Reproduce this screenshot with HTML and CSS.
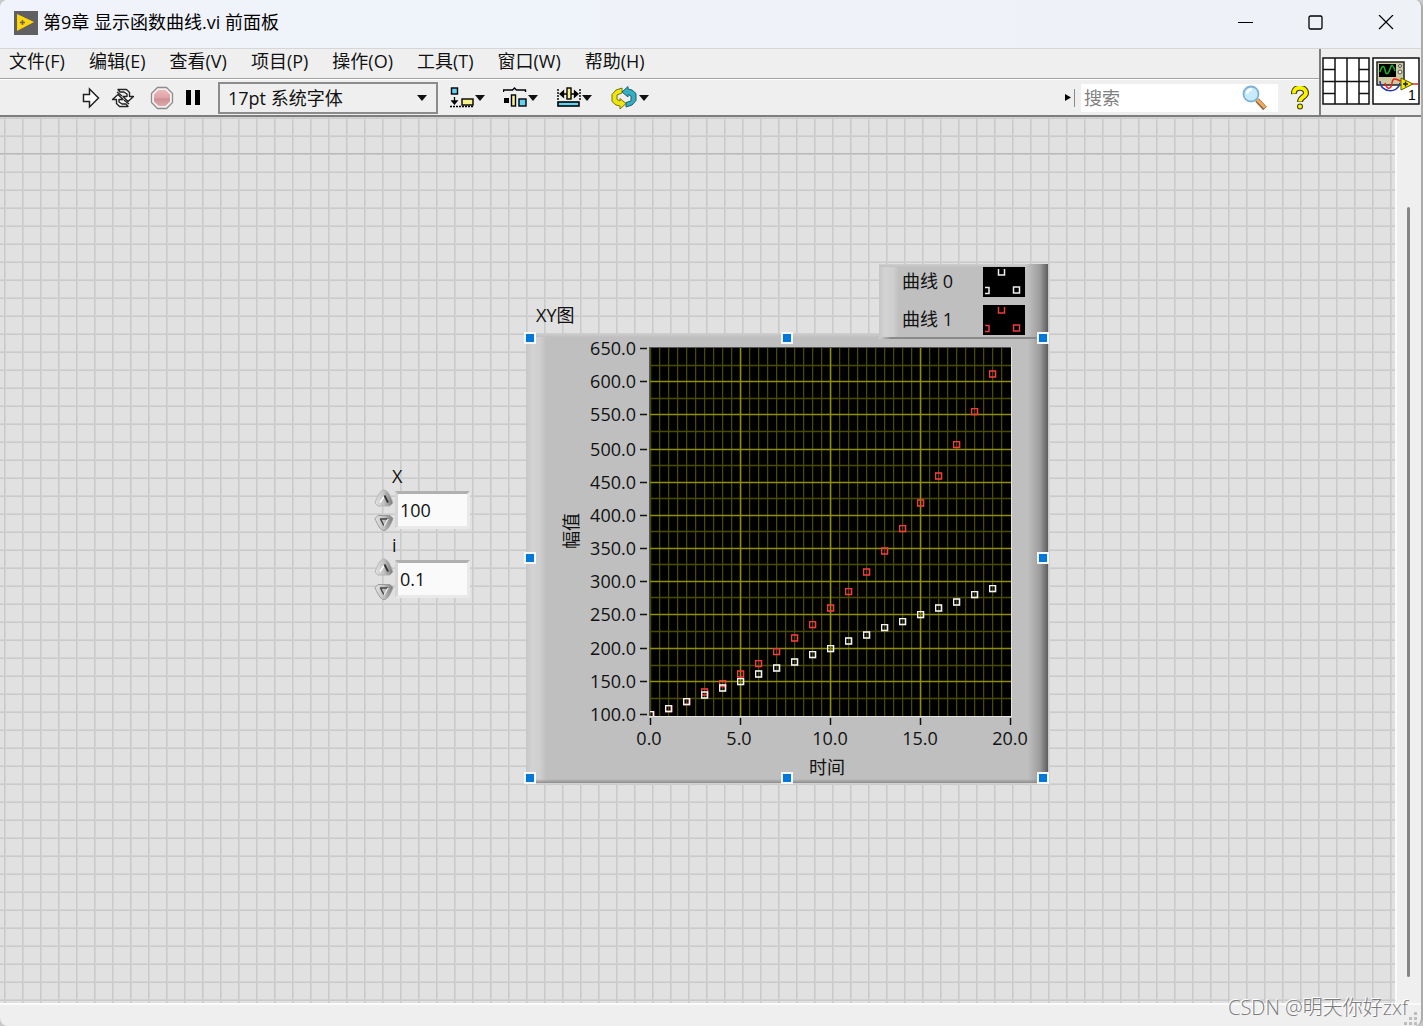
FILE: index.html
```html
<!DOCTYPE html>
<html lang="zh-CN">
<head>
<meta charset="utf-8">
<title>第9章 显示函数曲线.vi 前面板</title>
<link rel="stylesheet" href="styles.css">
</head>
<body>
<div class="window">
  <header class="titlebar">
    <svg class="app-icon" width="24" height="24" viewBox="0 0 24 24" aria-hidden="true">
      <rect width="24" height="24" fill="#606062"/>
      <path d="M3 3 L20 11 L3 20 Z" fill="#ffd60a"/>
      <path d="M6 11.500h5M8.500 9v5" stroke="#606062" stroke-width="1.500"/>
    </svg>
    <h1 class="title">第9章 显示函数曲线.vi 前面板</h1>
    <div class="caption-buttons">
      <button class="caption-button" aria-label="最小化"><svg width="16" height="16" viewBox="0 0 16 16"><path d="M0 7.500h15" stroke="#000"/></svg></button>
      <button class="caption-button" aria-label="最大化"><svg width="16" height="16" viewBox="0 0 16 16"><rect x="1" y="1" width="13" height="13" rx="1.500" fill="none" stroke="#000" stroke-width="1.300"/></svg></button>
      <button class="caption-button" aria-label="关闭"><svg width="16" height="16" viewBox="0 0 16 16"><path d="M1 0l14 14M15 0L1 14" stroke="#000" stroke-width="1.200"/></svg></button>
    </div>
  </header>

  <div class="chrome">
    <div class="bars">
      <nav class="menubar">
        <button>文件(F)</button>
        <button>编辑(E)</button>
        <button>查看(V)</button>
        <button>项目(P)</button>
        <button>操作(O)</button>
        <button>工具(T)</button>
        <button>窗口(W)</button>
        <button>帮助(H)</button>
      </nav>
      <div class="toolbar">
        <div class="run-group">
          <button aria-label="运行"><svg width="18" height="22" viewBox="0 0 18 22"><path d="M1.500 7.500h6v-5.500l9 9-9 9v-5.500h-6z" fill="#fff" stroke="#222" stroke-width="1.500"/></svg></button>
          <button aria-label="连续运行"><svg width="24" height="22" viewBox="0 0 24 22"><g fill="#fff" stroke="#222" stroke-width="1.400" stroke-linejoin="round"><path d="M7 2.500h8.500l3 3v4h4l-5.500 5-5-5h4V7L13 5H9z"/><path d="M17 19.500H8.500l-3-3v-4h-4l5.500-5 5 5H8V15l3 2h4z"/></g><path d="M6 5l5 4M13 13l5 4" stroke="#222" stroke-width="1.400"/></svg></button>
        </div>
        <div class="stop-group">
          <button aria-label="中止执行"><svg width="24" height="24" viewBox="0 0 24 24"><defs><linearGradient id="stop" x2="0" y2="1"><stop offset="0" stop-color="#eab8ba"/><stop offset=".5" stop-color="#dfa2a5"/><stop offset=".55" stop-color="#cc8f93"/><stop offset="1" stop-color="#dfa9ac"/></linearGradient></defs><path d="M7.500 1.500h9l6 6v9l-6 6h-9l-6-6v-9z" fill="#f7f1f1" stroke="#8b8b8b" stroke-width="1.300"/><path d="M8.500 4h7l4.500 4.500v7L15.500 20h-7L4 15.500v-7z" fill="url(#stop)"/></svg></button>
          <button aria-label="暂停"><svg width="14" height="16" viewBox="0 0 14 16"><path d="M0 0h5v15H0zM9 0h5v15H9z" fill="#000"/></svg></button>
        </div>
        <div class="font-select">
          <select aria-label="文本设置"><option>17pt 系统字体</option></select>
        </div>
        <div class="layout-group">
          <button class="drop" aria-label="对齐对象"><svg width="24" height="22" viewBox="0 0 24 22"><rect x="1.500" y="1" width="6" height="6" fill="#62d3f5" stroke="#000" stroke-width="1.400"/><path d="M4.500 10v6M2 14l2.500 3L7 14z" stroke="#000" stroke-width="1.300"/><rect x="12" y="12" width="11" height="6" fill="#f7f28a" stroke="#000" stroke-width="1.400"/><path d="M0 19.500h23" stroke="#000" stroke-width="1.300" stroke-dasharray="2 1"/></svg></button>
          <button class="drop" aria-label="分布对象"><svg width="24" height="22" viewBox="0 0 24 22"><path d="M.5 5V3h9l2-2 2 2h9v2" fill="none" stroke="#000" stroke-width="1.400"/><rect x="1" y="11" width="5" height="5"/><rect x="8.500" y="8" width="4" height="11" fill="#f7f28a" stroke="#000" stroke-width="1.400"/><rect x="16" y="12" width="7" height="7" fill="#62d3f5" stroke="#000" stroke-width="1.400"/></svg></button>
          <button class="drop" aria-label="调整对象大小"><svg width="25" height="22" viewBox="0 0 25 22"><path d="M2 2v12M24 2v12" stroke="#000" stroke-width="1.400" stroke-dasharray="2 1"/><path d="M4 7h18M7.500 4L4 7l3.500 3zM18.500 4L22 7l-3.500 3z" stroke="#000" stroke-width="1.300"/><rect x="11" y="1" width="4" height="11" fill="#f7f28a" stroke="#000" stroke-width="1.400"/><rect x="2" y="15" width="21" height="4" fill="#62d3f5" stroke="#000" stroke-width="1.600"/></svg></button>
          <button class="drop" aria-label="重新排序"><svg width="28" height="24" viewBox="0 0 28 24"><path d="M12 2L6 4 2 8.500v7L6 19l4 1v3l6-5.500-6-5V15l-3-1.500V9l5-2z" fill="#eee70e" stroke="#77730c"/><path d="M16 21l6-2 4-4.500v-7L22 4l-4-1V.5L12 6l6 5V8.500l3 1.500v5l-5 1.500z" fill="#35aec4" stroke="#17616e"/></svg></button>
        </div>
        <div class="search-group">
          <button class="expander" aria-label="展开"><svg width="10" height="18" viewBox="0 0 10 18"><path d="M0 5l6 3.500-6 3.500z"/><path d="M9.500 0v18" stroke="#8a8a8a"/></svg></button>
          <div class="search-box">
            <input type="search" placeholder="搜索" aria-label="搜索">
            <svg width="26" height="26" viewBox="0 0 26 26" aria-hidden="true"><path d="M15 15l8 8.500" stroke="#8e6a4c" stroke-width="5"/><path d="M15 14.500l8 8" stroke="#f0a85a" stroke-width="3"/><circle cx="9" cy="9" r="7.500" fill="#c6ecfc" stroke="#7fb1d6" stroke-width="1.800"/><path d="M5 8.500a4.500 4.500 0 0 1 5-4" fill="none" stroke="#fff" stroke-width="2.500"/></svg>
          </div>
          <button class="help" aria-label="帮助"><svg width="18" height="24" viewBox="0 0 18 24"><g fill="none"><path d="M3 8c-1-8 12-8 12-1 0 4-6 4-6 9" stroke="#3c3c10" stroke-width="6"/><circle cx="9" cy="20.500" r="3" fill="#3c3c10"/><path d="M3 7.500c-1-7.500 12-7.500 12-.5 0 4-6 4-6 8.500" stroke="#fbf200" stroke-width="3.800"/><circle cx="9" cy="20.500" r="2" fill="#fbf200"/></g></svg></button>
        </div>
      </div>
    </div>
    <div class="vi-pane">
      <svg width="48" height="48" viewBox="0 0 48 48" role="img" aria-label="连线板"><path d="M1 1h46v46H1zM13 1v46M25 1v46M37 1v46M1 24.500h46M1 12.500h12M37 12.500h10M1 36.500h12M37 36.500h10" fill="#fff" stroke="#111" stroke-width="1.500"/></svg>
      <svg width="48" height="48" viewBox="0 0 48 48" role="img" aria-label="VI图标"><rect x="1" y="1" width="46" height="46" fill="#fff" stroke="#111" stroke-width="1.500"/><rect x="5" y="5" width="27" height="23" fill="#cdc9a0" stroke="#222" stroke-width="1.500"/><rect x="7" y="7" width="17" height="13"/><path d="M8 15c2-7 4-7 5-2s3 5 5-1 3-4 5 2" fill="none" stroke="#19b428" stroke-width="1.500"/><g fill="#eee" stroke="#555"><circle cx="28" cy="9" r="1.500"/><circle cx="28" cy="15" r="2"/></g><path d="M8 24c0 12 18 13 20 2" fill="none" stroke="#223bb0" stroke-width="1.500"/><path d="M13 26c2 7 6 7 7 0s5-3 9-2M36 27h10" fill="none" stroke="#f02020" stroke-width="1.500"/><path d="M29 21l12 6-12 6z" fill="#f6ec00" stroke="#5d5a00"/><path d="M31 27h5M33.500 24.500v5" stroke="#222" stroke-width="1.500"/><text class="icon-number" x="36" y="43">1</text></svg>
    </div>
  </div>

  <div class="workspace">
    <main class="canvas">
      <div class="numeric numeric-x">
        <label for="num-x">X</label>
        <div class="numeric-row">
          <div class="spin">
            <button aria-label="增加 X"><svg width="20" height="20" viewBox="0 0 20 20"><use href="#spin-up"/></svg></button>
            <button aria-label="减少 X"><svg width="20" height="20" viewBox="0 0 20 20"><use href="#spin-down"/></svg></button>
          </div>
          <input id="num-x" type="text" value="100">
        </div>
      </div>
      <div class="numeric numeric-i">
        <label for="num-i">i</label>
        <div class="numeric-row">
          <div class="spin">
            <button aria-label="增加 i"><svg width="20" height="20" viewBox="0 0 20 20"><use href="#spin-up"/></svg></button>
            <button aria-label="减少 i"><svg width="20" height="20" viewBox="0 0 20 20"><use href="#spin-down"/></svg></button>
          </div>
          <input id="num-i" type="text" value="0.1">
        </div>
      </div>

      <h2 class="chart-title">XY图</h2>
      <section class="chart" aria-label="XY图">
        <svg class="plot" width="522" height="450" viewBox="526 333 522 450">
          <defs>
            <linearGradient id="knob"><stop offset="0" stop-color="#e6e6e6"/><stop offset=".5" stop-color="#c0c0c0"/><stop offset="1" stop-color="#777"/></linearGradient>
            <g id="spin-up"><path d="M10 1c4 0 7 7 9 13l-3 3H4l-3-3C3 8 6 1 10 1z" fill="url(#knob)" stroke="#b4b4b4"/><path d="M6 13.500l4-6" stroke="#fff" stroke-width="1.500"/><path d="M10.500 6.500l3.500 7" stroke="#333" stroke-width="1.800"/></g>
            <g id="spin-down"><path d="M10 19.500c4 0 7-7 9-12l-3-3H4l-3 3c2 5 5 12 9 12z" fill="url(#knob)" stroke="#9a9a9a"/><path d="M6.500 8l3.500 7M6 8h8" fill="none" stroke="#444" stroke-width="1.500"/><path d="M14 8l-4 7" stroke="#eee" stroke-width="1.300"/></g>
            <pattern id="minor-x" patternUnits="userSpaceOnUse" x="650" y="347" width="9" height="370"><path d="M.5 0v370" stroke="#4b4b00" stroke-width="1.500"/></pattern>
            <marker id="mark-white" markerUnits="userSpaceOnUse" markerWidth="9" markerHeight="9" refX="4" refY="4"><rect x="1" y="1" width="6" height="6" fill="none" stroke="#f4f4f4" stroke-width="1.600"/></marker>
            <marker id="mark-red" markerUnits="userSpaceOnUse" markerWidth="9" markerHeight="9" refX="4" refY="4"><rect x="1" y="1" width="6" height="6" fill="none" stroke="#f03c3c" stroke-width="1.600"/></marker>
            <clipPath id="area"><rect x="650" y="348" width="361" height="368"/></clipPath>
          </defs>
          <rect x="649" y="347" width="363" height="370" fill="#e4e4e4"/>
          <rect x="649" y="347" width="362" height="369" fill="#555"/>
          <rect x="650" y="348" width="361" height="368" fill="#000"/>
          <rect x="650" y="348" width="360" height="368" fill="url(#minor-x)"/>
          <path d="M650 365.500h361M650 398.500h361M650 431.500h361M650 465.500h361M650 498.500h361M650 531.500h361M650 564.500h361M650 597.500h361M650 631.500h361M650 665.500h361M650 698.500h361" stroke="#4b4b00" stroke-width="1.300"/>
          <path d="M740.500 348v368M830.500 348v368M920.500 348v368M650 381.500h361M650 414.500h361M650 449.500h361M650 482.500h361M650 515.500h361M650 548.500h361M650 581.500h361M650 614.500h361M650 648.500h361M650 681.500h361" stroke="#8f8f00" stroke-width="1.500"/>
          <g clip-path="url(#area)" fill="none" stroke="none">
            <polyline marker-start="url(#mark-red)" marker-mid="url(#mark-red)" marker-end="url(#mark-red)" points="650.500,714.500 668.500,708.500 686.500,701.500 704.500,692 722.500,683.500 740.500,674 758.500,663.500 776.500,651.500 794.500,638 812.500,624.500 830.500,608 848.500,591.500 866.500,572 884.500,551 902.500,528.500 920.500,503 938.500,476 956.500,444.500 974.500,411.500 992.500,374"/>
            <polyline marker-start="url(#mark-white)" marker-mid="url(#mark-white)" marker-end="url(#mark-white)" points="650.500,714.500 668.500,708.500 686.500,701.500 704.500,695 722.500,688 740.500,681.500 758.500,674 776.500,668 794.500,662 812.500,654.500 830.500,648.500 848.500,641 866.500,635 884.500,627.500 902.500,621.500 920.500,614.500 938.500,608 956.500,602 974.500,594.500 992.500,588.500"/>
          </g>
          <path d="M640 348.500h7M640 381.500h7M640 414.500h7M640 449.500h7M640 482.500h7M640 515.500h7M640 548.500h7M640 581.500h7M640 614.500h7M640 648.500h7M640 681.500h7M640 714.500h7M650.500 718v7M740.500 718v7M830.500 718v7M920.500 718v7M1010.500 718v7" stroke="#111" stroke-width="1.500"/>
          <g class="scale scale-y">
            <text x="636" y="355">650.0</text><text x="636" y="388">600.0</text><text x="636" y="421">550.0</text><text x="636" y="456">500.0</text><text x="636" y="489">450.0</text><text x="636" y="522">400.0</text><text x="636" y="555">350.0</text><text x="636" y="588">300.0</text><text x="636" y="621">250.0</text><text x="636" y="655">200.0</text><text x="636" y="688">150.0</text><text x="636" y="721">100.0</text>
          </g>
          <g class="scale scale-x">
            <text x="649" y="745">0.0</text><text x="739" y="745">5.0</text><text x="830" y="745">10.0</text><text x="920" y="745">15.0</text><text x="1010" y="745">20.0</text><text x="827" y="774">时间</text><text transform="translate(578 531) rotate(-90)">幅值</text>
          </g>
        </svg>
      </section>
      <ul class="legend">
        <li><span>曲线 0</span><svg width="42" height="30" viewBox="0 0 42 30"><rect width="42" height="30"/><path d="M15.500 2v6h6V2M2 20.500h4v6H2M30.500 20h6v6h-6z" fill="none" stroke="#eee" stroke-width="1.500"/></svg></li>
        <li><span>曲线 1</span><svg width="42" height="30" viewBox="0 0 42 30"><rect width="42" height="30"/><path d="M15.500 2v6h6V2M2 20.500h4v6H2M30.500 20h6v6h-6z" fill="none" stroke="#f03c3c" stroke-width="1.500"/></svg></li>
      </ul>
      <div class="selection" aria-hidden="true">
        <i></i><i></i><i></i><i></i><b></b><i></i><i></i><i></i><i></i>
      </div>
    </main>
    <div class="scroll-rail"><div class="scroll-thumb"></div></div>
  </div>
  <footer class="statusbar">
    <span class="watermark">CSDN @明天你好zxf</span>
    <svg class="grip" width="14" height="14" viewBox="0 0 14 14" aria-hidden="true"><path d="M10 0h3v3h-3zM5 5h3v3H5zM10 5h3v3h-3zM0 10h3v3H0zM5 10h3v3H5zM10 10h3v3h-3z" fill="#bdbdbd"/></svg>
  </footer>
</div>
</body>
</html>
```
FILE: styles.css
```css
* { box-sizing: border-box; }

body {
  margin: 0;
  background: #c9c9c9;
  color: #111;
  font: 18px/24px "Open Sans", "Noto Sans CJK SC", sans-serif;
}

button, select, input { font: inherit; color: inherit; }

button {
  display: flex;
  align-items: center;
  justify-content: center;
  padding: 0;
  border: 0;
  background: none;
}

svg { display: block; flex: none; }

.window {
  display: flex;
  flex-direction: column;
  height: 100vh;
  border-right: 2px solid #ababab;
  border-radius: 8px;
  background: #efefef;
  overflow: hidden;
}

/* Title bar */
.titlebar {
  display: flex;
  align-items: center;
  height: 49px;
  padding: 0 0 3px 14px;
  border-bottom: 1px solid #d6d6d6;
  background: linear-gradient(90deg, #f0f3fb, #eef2f7);
}
.title {
  margin: 0 0 0 5px;
  padding-bottom: 2px;
  color: #000;
  font-size: 18px;
  font-weight: 400;
}
.caption-buttons { display: flex; margin-left: auto; }
.caption-button { width: 70px; height: 45px; }

/* Menus, toolbar and VI icon */
.chrome { display: flex; border-bottom: 2px solid #7d7d7d; }
.bars { flex: 1; min-width: 0; }
.menubar {
  display: flex;
  gap: 24px;
  height: 30px;
  padding: 0 9px 6px;
  border-bottom: 1px solid #a2a2a2;
}
.toolbar {
  display: flex;
  align-items: center;
  height: 36px;
  padding: 1px 10px 0 82px;
  border-top: 1px solid #fff;
}
.run-group { display: flex; gap: 11px; }
.stop-group { display: flex; gap: 12px; margin-left: 15px; }
.font-select { position: relative; margin-left: 18px; }
.font-select select {
  display: block;
  appearance: none;
  width: 220px;
  height: 32px;
  padding: 0 8px;
  border: 2px solid #8c8c8c;
  border-radius: 0;
  background: #efefef;
}
.font-select::after {
  content: "";
  position: absolute;
  right: 11px;
  top: 13px;
  border: 5px solid transparent;
  border-top: 6px solid #111;
  border-bottom: 0;
  pointer-events: none;
}
.layout-group { display: flex; gap: 18px; margin-left: 12px; }
.drop { gap: 1px; }
.drop::after {
  content: "";
  border: 5px solid transparent;
  border-top: 6px solid #111;
  border-bottom: 0;
}
.search-group { display: flex; align-items: center; margin-left: auto; }
.search-box {
  display: flex;
  align-items: center;
  width: 197px;
  height: 28px;
  margin: 0 13px 0 6px;
  padding: 0 10px 0 3px;
  background: #fff;
}
.search-box input {
  flex: 1;
  min-width: 0;
  padding: 0;
  border: 0;
  outline: 0;
  background: none;
  appearance: none;
}
.search-box input::placeholder { color: #808080; opacity: 1; }
.vi-pane {
  display: flex;
  gap: 2px;
  padding: 8px 1px 0;
  border-left: 2px solid #7d7d7d;
}
.icon-number { font: 14px "Liberation Sans", sans-serif; }

/* Front panel */
.workspace { display: flex; flex: 1; min-height: 0; }
.canvas {
  position: relative;
  flex: 1;
  overflow: hidden;
  background:
    linear-gradient(#b9b9b9, #b9b9b9) 0 36px / 100% 1px no-repeat,
    linear-gradient(90deg, #cacaca 1px, #d3d3d3 1px, #d3d3d3 2px, transparent 2px) 4px 0 / 18px 18px,
    linear-gradient(#d3d3d3 1px, #cacaca 1px, #cacaca 2px, transparent 2px) 0 18px / 18px 18px,
    #e1e1e1;
}
.scroll-rail {
  width: 26px;
  padding: 90px 11px 26px 10px;
  border-left: 2px solid #fafafa;
}
.scroll-thumb { height: 100%; border-radius: 2px; background: #868686; }
.statusbar {
  position: relative;
  height: 23px;
  border-top: 2px solid #fafafa;
}
.grip { position: absolute; right: 3px; bottom: 0; }
.watermark {
  position: absolute;
  right: 13px;
  bottom: 6px;
  color: #7c7c7c;
  font: 300 20px/24px "Open Sans", "Noto Sans CJK SC", sans-serif;
  text-shadow: -1px -1px 0 #fff;
  white-space: nowrap;
}

.numeric { position: absolute; left: 374px; }
.numeric-x { top: 347px; }
.numeric-i { top: 416px; }
.numeric label { display: block; padding-left: 18px; }
.numeric-row { display: flex; align-items: center; gap: 1px; padding-top: 1px; }
.spin { display: flex; flex-direction: column; gap: 2px; }
.numeric input {
  width: 75px;
  height: 38px;
  padding: 0 2px;
  border: 3px solid;
  border-color: #b0b0b0 #e9e9e9 #e9e9e9 #d5d5d5;
  outline: 0;
  background: #fafafa;
}

.chart-title {
  position: absolute;
  left: 536px;
  top: 186px;
  margin: 0;
  font-size: 18px;
  font-weight: 400;
}
.chart {
  position: absolute;
  left: 526px;
  top: 216px;
  background:
    linear-gradient(#cfcfcf, #c0c0c0) 0 0 / 100% 4px no-repeat,
    linear-gradient(transparent, #8c8c8c) 0 100% / 100% 4px no-repeat,
    linear-gradient(90deg, #c6c6c6, #d3d3d3 6px, #cfcfcf 14px, #bfbfbf 20px, #bfbfbf calc(100% - 20px), #9c9c9c calc(100% - 8px), #5c5c5c);
}
.scale { fill: #111; }
.scale-y { text-anchor: end; }
.scale-x { text-anchor: middle; }
.legend {
  position: absolute;
  left: 879px;
  top: 147px;
  display: flex;
  flex-direction: column;
  gap: 8px;
  width: 169px;
  margin: 0;
  padding: 3px 23px 4px;
  list-style: none;
  background:
    linear-gradient(#cfcfcf, #c0c0c0) 0 0 / 148px 3px no-repeat,
    linear-gradient(90deg, #d3d3d3, #8a8a8a 12px) 0 100% / 160px 2px no-repeat,
    linear-gradient(90deg, #c6c6c6, #d3d3d3 6px, #cfcfcf 14px, #bfbfbf 20px, #bfbfbf calc(100% - 20px), #9c9c9c calc(100% - 8px), #5c5c5c);
}
.legend li { display: flex; align-items: center; justify-content: space-between; }
.legend span { padding-bottom: 2px; }
.selection {
  position: absolute;
  left: 524px;
  top: 215px;
  display: grid;
  grid-template-columns: repeat(3, 12px);
  place-content: space-between;
  width: 525px;
  height: 452px;
  pointer-events: none;
}
.selection i {
  width: 12px;
  height: 12px;
  border: 2px solid #f4f8fc;
  background: #0078d7;
}
```
